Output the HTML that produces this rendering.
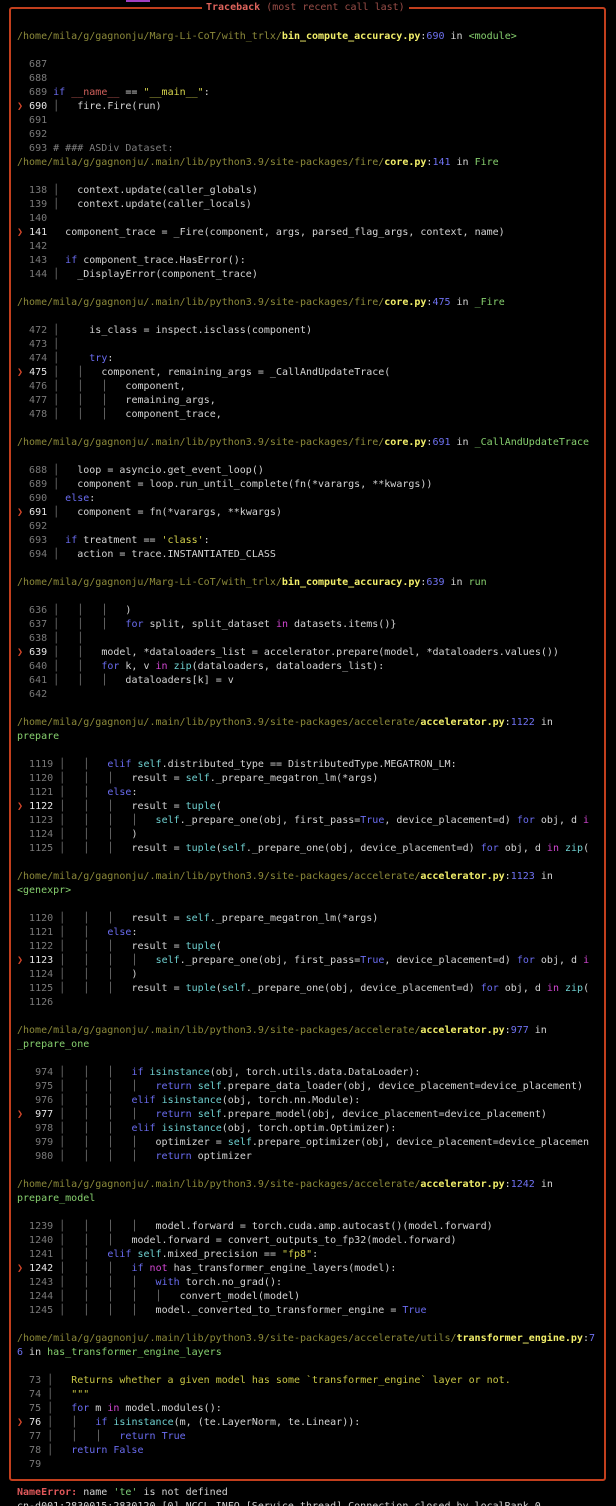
<!DOCTYPE html>
<html><head><meta charset="utf-8">
<style>
html,body{margin:0;padding:0;background:#000;width:616px;height:1506px;overflow:hidden;position:relative}
pre{position:absolute;left:17px;top:2px;margin:0;font-family:"DejaVu Sans Mono","Liberation Mono",monospace;font-size:10px;line-height:14px;color:#d4d4d4;white-space:pre}
.box{position:absolute;left:9px;top:7px;width:593px;height:1470px;border:2px solid #c23f1d;border-radius:3px}
.title{position:absolute;left:202px;top:1px;background:#000;padding:0 4px;font-family:"DejaVu Sans Mono",monospace;font-size:10px;line-height:14px;color:#9a4e48}
.title b{color:#e0645c}
.bar{position:absolute;left:126px;top:0;width:24px;height:2px;background:#a23fc0}
.p{color:#8c8a3a}.f{color:#f2ef6a;font-weight:bold}.n{color:#6f72f2}.fn{color:#86cf6e}
.l{color:#7a7a7a}.cur{color:#e6e6e6}.a{color:#d4462a}.g{color:#777}
.k{color:#6a6cf0}.m{color:#d046d0}.c{color:#6fd0d0}.s{color:#d6d44c}.r{color:#d0605c}.cm{color:#7f7f7f}.d{color:#c8c644}
.e{color:#e0585a;font-weight:bold}.gs{color:#7ed07a}
</style></head><body>
<div class="bar"></div>
<div class="box"></div>
<div class="title"><b>Traceback</b> (most recent call last)</div>
<pre>&#8203;

<span class="p">/home/mila/g/gagnonju/Marg-Li-CoT/with_trlx/</span><span class="f">bin_compute_accuracy.py</span>:<span class="n">690</span> in <span class="fn">&lt;module&gt;</span>

  <span class="l">687</span>
  <span class="l">688</span>
  <span class="l">689</span> <span class="k">if</span> <span class="r">__name__</span> == <span class="s">"__main__"</span>:
<span class="a">❯</span> <span class="cur">690</span> <span class="g">│</span>   fire.Fire(run)
  <span class="l">691</span>
  <span class="l">692</span>
  <span class="l">693</span> <span class="cm"># ### ASDiv Dataset:</span>
<span class="p">/home/mila/g/gagnonju/.main/lib/python3.9/site-packages/fire/</span><span class="f">core.py</span>:<span class="n">141</span> in <span class="fn">Fire</span>

  <span class="l">138</span> <span class="g">│</span>   context.update(caller_globals)
  <span class="l">139</span> <span class="g">│</span>   context.update(caller_locals)
  <span class="l">140</span>
<span class="a">❯</span> <span class="cur">141</span>   component_trace = _Fire(component, args, parsed_flag_args, context, name)
  <span class="l">142</span>
  <span class="l">143</span>   <span class="k">if</span> component_trace.HasError():
  <span class="l">144</span> <span class="g">│</span>   _DisplayError(component_trace)

<span class="p">/home/mila/g/gagnonju/.main/lib/python3.9/site-packages/fire/</span><span class="f">core.py</span>:<span class="n">475</span> in <span class="fn">_Fire</span>

  <span class="l">472</span> <span class="g">│</span>     is_class = inspect.isclass(component)
  <span class="l">473</span> <span class="g">│</span>
  <span class="l">474</span> <span class="g">│</span>     <span class="k">try</span>:
<span class="a">❯</span> <span class="cur">475</span> <span class="g">│</span>   <span class="g">│</span>   component, remaining_args = _CallAndUpdateTrace(
  <span class="l">476</span> <span class="g">│</span>   <span class="g">│</span>   <span class="g">│</span>   component,
  <span class="l">477</span> <span class="g">│</span>   <span class="g">│</span>   <span class="g">│</span>   remaining_args,
  <span class="l">478</span> <span class="g">│</span>   <span class="g">│</span>   <span class="g">│</span>   component_trace,

<span class="p">/home/mila/g/gagnonju/.main/lib/python3.9/site-packages/fire/</span><span class="f">core.py</span>:<span class="n">691</span> in <span class="fn">_CallAndUpdateTrace</span>

  <span class="l">688</span> <span class="g">│</span>   loop = asyncio.get_event_loop()
  <span class="l">689</span> <span class="g">│</span>   component = loop.run_until_complete(fn(*varargs, **kwargs))
  <span class="l">690</span>   <span class="k">else</span>:
<span class="a">❯</span> <span class="cur">691</span> <span class="g">│</span>   component = fn(*varargs, **kwargs)
  <span class="l">692</span>
  <span class="l">693</span>   <span class="k">if</span> treatment == <span class="s">'class'</span>:
  <span class="l">694</span> <span class="g">│</span>   action = trace.INSTANTIATED_CLASS

<span class="p">/home/mila/g/gagnonju/Marg-Li-CoT/with_trlx/</span><span class="f">bin_compute_accuracy.py</span>:<span class="n">639</span> in <span class="fn">run</span>

  <span class="l">636</span> <span class="g">│</span>   <span class="g">│</span>   <span class="g">│</span>   )
  <span class="l">637</span> <span class="g">│</span>   <span class="g">│</span>   <span class="g">│</span>   <span class="k">for</span> split, split_dataset <span class="m">in</span> datasets.items()}
  <span class="l">638</span> <span class="g">│</span>   <span class="g">│</span>
<span class="a">❯</span> <span class="cur">639</span> <span class="g">│</span>   <span class="g">│</span>   model, *dataloaders_list = accelerator.prepare(model, *dataloaders.values())
  <span class="l">640</span> <span class="g">│</span>   <span class="g">│</span>   <span class="k">for</span> k, v <span class="m">in</span> <span class="c">zip</span>(dataloaders, dataloaders_list):
  <span class="l">641</span> <span class="g">│</span>   <span class="g">│</span>   <span class="g">│</span>   dataloaders[k] = v
  <span class="l">642</span>

<span class="p">/home/mila/g/gagnonju/.main/lib/python3.9/site-packages/accelerate/</span><span class="f">accelerator.py</span>:<span class="n">1122</span> in
<span class="fn">prepare</span>

  <span class="l">1119</span> <span class="g">│</span>   <span class="g">│</span>   <span class="k">elif</span> <span class="c">self</span>.distributed_type == DistributedType.MEGATRON_LM:
  <span class="l">1120</span> <span class="g">│</span>   <span class="g">│</span>   <span class="g">│</span>   result = <span class="c">self</span>._prepare_megatron_lm(*args)
  <span class="l">1121</span> <span class="g">│</span>   <span class="g">│</span>   <span class="k">else</span>:
<span class="a">❯</span> <span class="cur">1122</span> <span class="g">│</span>   <span class="g">│</span>   <span class="g">│</span>   result = <span class="c">tuple</span>(
  <span class="l">1123</span> <span class="g">│</span>   <span class="g">│</span>   <span class="g">│</span>   <span class="g">│</span>   <span class="c">self</span>._prepare_one(obj, first_pass=<span class="k">True</span>, device_placement=d) <span class="k">for</span> obj, d <span class="m">i</span>
  <span class="l">1124</span> <span class="g">│</span>   <span class="g">│</span>   <span class="g">│</span>   )
  <span class="l">1125</span> <span class="g">│</span>   <span class="g">│</span>   <span class="g">│</span>   result = <span class="c">tuple</span>(<span class="c">self</span>._prepare_one(obj, device_placement=d) <span class="k">for</span> obj, d <span class="m">in</span> <span class="c">zip</span>(

<span class="p">/home/mila/g/gagnonju/.main/lib/python3.9/site-packages/accelerate/</span><span class="f">accelerator.py</span>:<span class="n">1123</span> in
<span class="fn">&lt;genexpr&gt;</span>

  <span class="l">1120</span> <span class="g">│</span>   <span class="g">│</span>   <span class="g">│</span>   result = <span class="c">self</span>._prepare_megatron_lm(*args)
  <span class="l">1121</span> <span class="g">│</span>   <span class="g">│</span>   <span class="k">else</span>:
  <span class="l">1122</span> <span class="g">│</span>   <span class="g">│</span>   <span class="g">│</span>   result = <span class="c">tuple</span>(
<span class="a">❯</span> <span class="cur">1123</span> <span class="g">│</span>   <span class="g">│</span>   <span class="g">│</span>   <span class="g">│</span>   <span class="c">self</span>._prepare_one(obj, first_pass=<span class="k">True</span>, device_placement=d) <span class="k">for</span> obj, d <span class="m">i</span>
  <span class="l">1124</span> <span class="g">│</span>   <span class="g">│</span>   <span class="g">│</span>   )
  <span class="l">1125</span> <span class="g">│</span>   <span class="g">│</span>   <span class="g">│</span>   result = <span class="c">tuple</span>(<span class="c">self</span>._prepare_one(obj, device_placement=d) <span class="k">for</span> obj, d <span class="m">in</span> <span class="c">zip</span>(
  <span class="l">1126</span>

<span class="p">/home/mila/g/gagnonju/.main/lib/python3.9/site-packages/accelerate/</span><span class="f">accelerator.py</span>:<span class="n">977</span> in
<span class="fn">_prepare_one</span>

   <span class="l">974</span> <span class="g">│</span>   <span class="g">│</span>   <span class="g">│</span>   <span class="k">if</span> <span class="c">isinstance</span>(obj, torch.utils.data.DataLoader):
   <span class="l">975</span> <span class="g">│</span>   <span class="g">│</span>   <span class="g">│</span>   <span class="g">│</span>   <span class="k">return</span> <span class="c">self</span>.prepare_data_loader(obj, device_placement=device_placement)
   <span class="l">976</span> <span class="g">│</span>   <span class="g">│</span>   <span class="g">│</span>   <span class="k">elif</span> <span class="c">isinstance</span>(obj, torch.nn.Module):
<span class="a">❯</span>  <span class="cur">977</span> <span class="g">│</span>   <span class="g">│</span>   <span class="g">│</span>   <span class="g">│</span>   <span class="k">return</span> <span class="c">self</span>.prepare_model(obj, device_placement=device_placement)
   <span class="l">978</span> <span class="g">│</span>   <span class="g">│</span>   <span class="g">│</span>   <span class="k">elif</span> <span class="c">isinstance</span>(obj, torch.optim.Optimizer):
   <span class="l">979</span> <span class="g">│</span>   <span class="g">│</span>   <span class="g">│</span>   <span class="g">│</span>   optimizer = <span class="c">self</span>.prepare_optimizer(obj, device_placement=device_placemen
   <span class="l">980</span> <span class="g">│</span>   <span class="g">│</span>   <span class="g">│</span>   <span class="g">│</span>   <span class="k">return</span> optimizer

<span class="p">/home/mila/g/gagnonju/.main/lib/python3.9/site-packages/accelerate/</span><span class="f">accelerator.py</span>:<span class="n">1242</span> in
<span class="fn">prepare_model</span>

  <span class="l">1239</span> <span class="g">│</span>   <span class="g">│</span>   <span class="g">│</span>   <span class="g">│</span>   model.forward = torch.cuda.amp.autocast()(model.forward)
  <span class="l">1240</span> <span class="g">│</span>   <span class="g">│</span>   <span class="g">│</span>   model.forward = convert_outputs_to_fp32(model.forward)
  <span class="l">1241</span> <span class="g">│</span>   <span class="g">│</span>   <span class="k">elif</span> <span class="c">self</span>.mixed_precision == <span class="s">"fp8"</span>:
<span class="a">❯</span> <span class="cur">1242</span> <span class="g">│</span>   <span class="g">│</span>   <span class="g">│</span>   <span class="k">if</span> <span class="m">not</span> has_transformer_engine_layers(model):
  <span class="l">1243</span> <span class="g">│</span>   <span class="g">│</span>   <span class="g">│</span>   <span class="g">│</span>   <span class="k">with</span> torch.no_grad():
  <span class="l">1244</span> <span class="g">│</span>   <span class="g">│</span>   <span class="g">│</span>   <span class="g">│</span>   <span class="g">│</span>   convert_model(model)
  <span class="l">1245</span> <span class="g">│</span>   <span class="g">│</span>   <span class="g">│</span>   <span class="g">│</span>   model._converted_to_transformer_engine = <span class="k">True</span>

<span class="p">/home/mila/g/gagnonju/.main/lib/python3.9/site-packages/accelerate/utils/</span><span class="f">transformer_engine.py</span>:<span class="n">7</span>
<span class="n">6</span> in <span class="fn">has_transformer_engine_layers</span>

  <span class="l">73</span> <span class="g">│</span>   <span class="d">Returns whether a given model has some `transformer_engine` layer or not.</span>
  <span class="l">74</span> <span class="g">│</span>   <span class="d">"""</span>
  <span class="l">75</span> <span class="g">│</span>   <span class="k">for</span> m <span class="m">in</span> model.modules():
<span class="a">❯</span> <span class="cur">76</span> <span class="g">│</span>   <span class="g">│</span>   <span class="k">if</span> <span class="c">isinstance</span>(m, (te.LayerNorm, te.Linear)):
  <span class="l">77</span> <span class="g">│</span>   <span class="g">│</span>   <span class="g">│</span>   <span class="k">return</span> <span class="k">True</span>
  <span class="l">78</span> <span class="g">│</span>   <span class="k">return</span> <span class="k">False</span>
  <span class="l">79</span>

<span class="e">NameError:</span> name <span class="gs">'te'</span> is not defined
cn-d001:2830015:2830120 [0] NCCL INFO [Service thread] Connection closed by localRank 0
</pre>
</body></html>
